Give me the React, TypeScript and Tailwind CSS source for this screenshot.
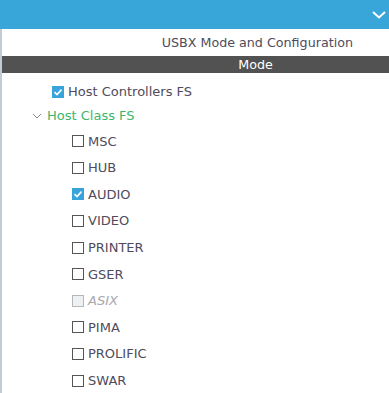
import React from "react";

const items = [
  { label: "MSC", checked: false },
  { label: "HUB", checked: false },
  { label: "AUDIO", checked: true },
  { label: "VIDEO", checked: false },
  { label: "PRINTER", checked: false },
  { label: "GSER", checked: false },
  { label: "ASIX", checked: false, disabled: true },
  { label: "PIMA", checked: false },
  { label: "PROLIFIC", checked: false },
  { label: "SWAR", checked: false },
];

function Box({ checked, disabled }: { checked?: boolean; disabled?: boolean }) {
  if (checked) {
    return (
      <span className="w-3 h-3 bg-[#39a3dc] flex items-center justify-center shrink-0">
        <svg viewBox="0 0 12 12" className="w-3 h-3">
          <path d="M2.5 6.2 L5 8.6 L9.5 3.6" fill="none" stroke="white" strokeWidth="1.6" />
        </svg>
      </span>
    );
  }
  return (
    <span
      className={
        disabled
          ? "w-3 h-3 border border-[#b4b8bc] bg-[#eef0f2] shrink-0"
          : "w-3 h-3 border border-[#555555] bg-white shrink-0"
      }
    />
  );
}

export default function App() {
  return (
    <div className="w-[389px] h-[393px] overflow-hidden bg-white text-[13px] text-[#4f4b5c]" style={{ fontFamily: "'DejaVu Sans', sans-serif" }}>
      <div className="h-[29px] bg-[#39a6da] flex items-center justify-end pr-[3px]">
        <svg viewBox="0 0 14 8" className="w-[14px] h-[8px]">
          <path d="M1 1 L7 6.5 L13 1" fill="none" stroke="white" strokeWidth="2" />
        </svg>
      </div>
      <div className="flex h-[364px]">
        <div className="w-[2px] bg-[#c3ccd4]" />
        <div className="flex-1">
          <div className="h-[27px] flex items-center justify-end pr-[36px] text-[12.7px]">USBX Mode and Configuration</div>
          <div className="h-[17px] bg-[#525252] text-white text-[12.7px] flex items-center justify-center pl-[120px]">Mode</div>
          <div className="flex items-center gap-[4px] pl-[50px] h-[24px] mt-[7px]">
            <Box checked />
            <span>Host Controllers FS</span>
          </div>
          <div className="flex items-center pl-[30px] h-[24px]">
            <svg viewBox="0 0 10 6" className="w-[10px] h-[6px] mr-[5px]">
              <path d="M1 1 L5 5 L9 1" fill="none" stroke="#8a8a8a" strokeWidth="1" />
            </svg>
            <span className="text-[#3cb66c]">Host Class FS</span>
          </div>
          {items.map((it) => (
            <div key={it.label} className="flex items-center gap-[4px] pl-[70px] h-[26.6px]">
              <Box checked={it.checked} disabled={it.disabled} />
              <span className={it.disabled ? "italic text-[#a8a8ae]" : ""}>{it.label}</span>
            </div>
          ))}
        </div>
      </div>
    </div>
  );
}
